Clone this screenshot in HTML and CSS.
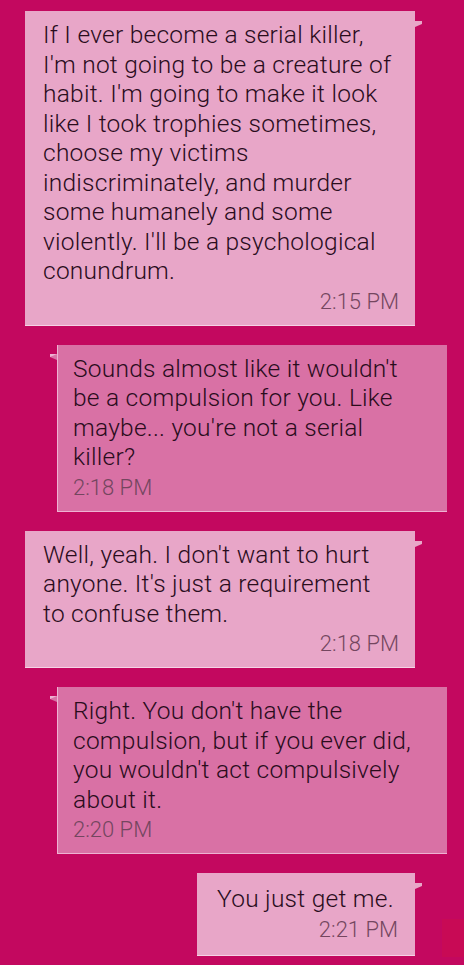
FILE: index.html
```html
<!DOCTYPE html>
<html lang="en">
<head>
    <meta charset="UTF-8">
    <meta name="viewport" content="width=device-width, initial-scale=1.0">
    <title>Messages</title>
    <link rel="stylesheet" href="styles.css">
</head>
<body>
    <div class="thread">
        <div class="bubble mine">
            <p class="text">If I ever become a serial killer, I'm not going to be a creature of habit. I'm going to make it look like I took trophies sometimes, choose my victims indiscriminately, and murder some humanely and some violently. I'll be a psychological conundrum.</p>
            <div class="time">2:15 PM</div>
        </div>

        <div class="bubble theirs">
            <p class="text">Sounds almost like it wouldn't be a compulsion for you. Like maybe... you're not a serial killer?</p>
            <div class="time">2:18 PM</div>
        </div>

        <div class="bubble mine">
            <p class="text">Well, yeah. I don't want to hurt anyone. It's just a requirement to confuse them.</p>
            <div class="time">2:18 PM</div>
        </div>

        <div class="bubble theirs">
            <p class="text">Right. You don't have the compulsion, but if you ever did, you wouldn't act compulsively about it.</p>
            <div class="time">2:20 PM</div>
        </div>

        <div class="bubble mine short">
            <p class="text">You just get me.</p>
            <div class="time">2:21 PM</div>
        </div>
    </div>
    <div class="corner"></div>
</body>
</html>
```

FILE: styles.css
```css
html, body {
    height: 100%;
}
body {
    margin: 0;
    background-color: #c3085f;
    font-family: Roboto, 'Noto Sans', Arial, sans-serif;
    font-weight: 300;
    color: #2a0c1c;
    overflow: hidden;
}
.thread {
    display: flex;
    flex-direction: column;
    gap: 19px;
    padding-top: 11px;
}
.bubble {
    position: relative;
    box-sizing: border-box;
    width: 390px;
}
.text {
    margin: 0;
    font-size: 24.5px;
    line-height: 29.5px;
    letter-spacing: 0.25px;
}
.time {
    margin-top: 2px;
    font-size: 22px;
    line-height: 28px;
    color: #74465f;
}

/* light, right-tailed */
.mine {
    margin-left: 25px;
    background-color: #e8a6c8;
    border-bottom: 1px solid #f6d3e5;
    padding: 9px 16px 9px 18px;
}
.mine .text {
    padding-right: 4px;
}
.mine .time {
    text-align: right;
}
.mine::after {
    content: '';
    position: absolute;
    top: 10px;
    right: -7px;
    border-top: 3px solid #e8a6c8;
    border-left: 7px solid #e8a6c8;
    border-right: 0 solid transparent;
    border-bottom: 3px solid transparent;
}
.mine.short {
    width: 218px;
    margin-left: 197px;
    padding: 11px 17px 11px 20px;
}
.mine.short .text {
    padding-right: 0;
}

/* darker, left-tailed */
.theirs {
    margin-left: 57px;
    background-color: #d971a5;
    border-left: 1px solid #eeb2d2;
    border-bottom: 1px solid #eeb2d2;
    padding: 9px 16px 9px 15px;
}
.theirs .text {
    padding-right: 4px;
}
.theirs::before {
    content: '';
    position: absolute;
    top: 9px;
    left: -8px;
    border-top: 3px solid #eeb2d2;
    border-right: 7px solid #d971a5;
    border-bottom: 3px solid transparent;
}

.corner {
    position: absolute;
    right: 0;
    bottom: 8px;
    width: 22px;
    height: 38px;
    background-color: #c80a55;
}
```
